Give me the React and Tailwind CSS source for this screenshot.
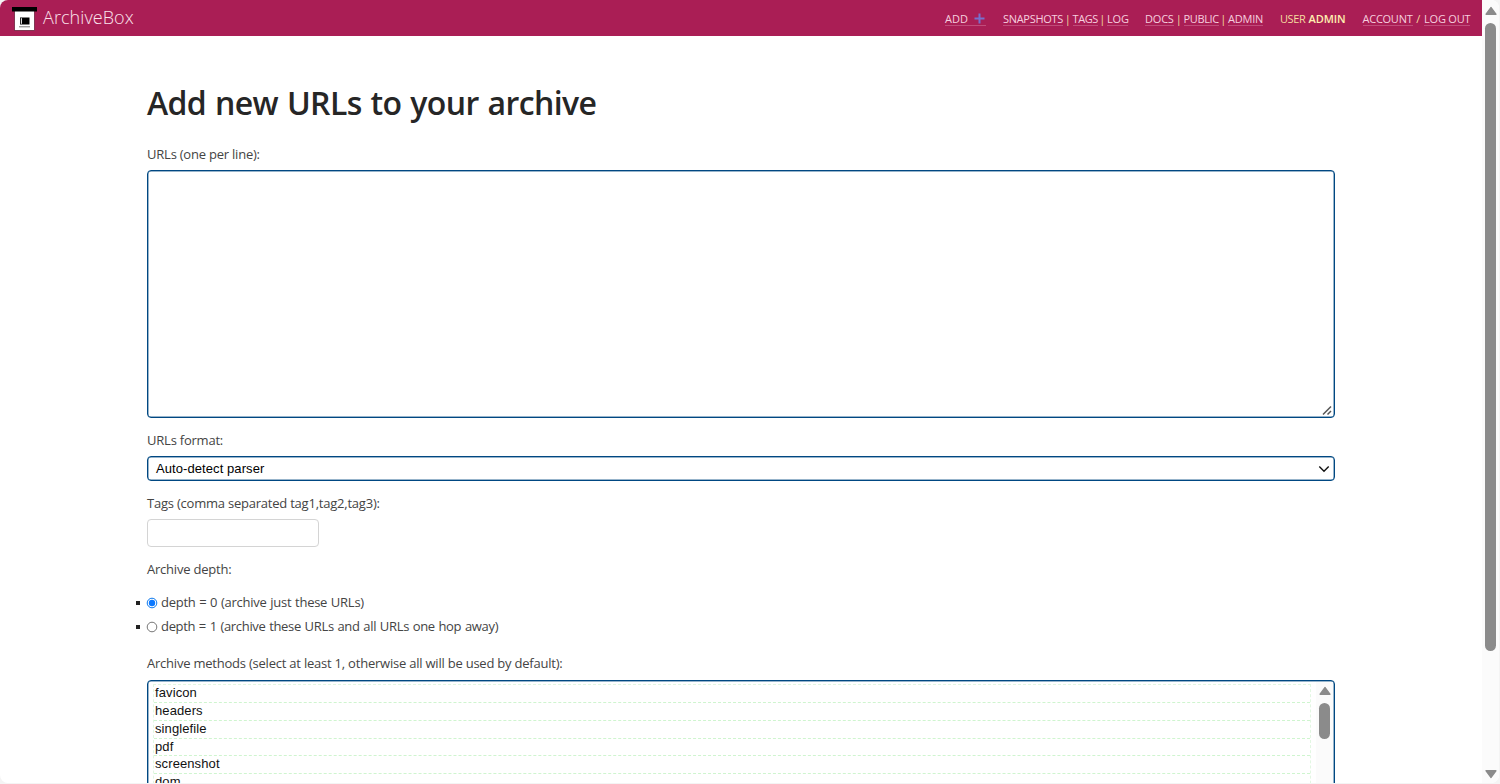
import React from "react";

const methods = ["favicon", "headers", "singlefile", "pdf", "screenshot", "dom"];

function Logo() {
  return (
    <svg width="25" height="24" viewBox="0 0 25 24" className="shrink-0">
      <rect x="2.5" y="3" width="20" height="20.5" fill="#fff" stroke="#6b2440" strokeWidth="0.8" />
      <rect x="0" y="0" width="25" height="4.5" fill="#000" />
      <rect x="8" y="10.5" width="9.5" height="7" fill="#000" />
      <rect x="8.8" y="11.2" width="1.2" height="5.6" fill="#ddd" />
      <rect x="7" y="19.3" width="11" height="1" fill="#777" />
    </svg>
  );
}

function NavLink({ children, className = "" }) {
  return (
    <a className={`flex h-[14px] items-center border-b border-[#c04c7a] whitespace-nowrap text-[#f6cfdf] ${className}`}>
      {children}
    </a>
  );
}

function Arrow({ down = false }) {
  return (
    <svg width="12" height="10" viewBox="0 0 12 10" className={down ? "shrink-0 rotate-180" : "shrink-0"}>
      <path d="M6 1.6 10.8 8.3H1.2Z" fill="#8b8b8b" stroke="#8b8b8b" strokeWidth="1.6" strokeLinejoin="round" />
    </svg>
  );
}

function Label({ children, className = "" }) {
  return <div className={`h-5 text-[13px] leading-[18px] tracking-[-0.22px] whitespace-nowrap text-[#444] ${className}`}>{children}</div>;
}

function Radio({ checked, children, className = "" }) {
  return (
    <div className="-ml-3 flex h-5 items-center">
      <span className="mt-px h-1 w-1 translate-x-px bg-[#222]" />
      <svg width="12" height="12" viewBox="0 0 12 12" className="mt-px ml-[7px]">
        <circle cx="6" cy="6" r="4.8" fill="#fff" stroke={checked ? "#0b78ee" : "#777"} strokeWidth="1" />
        {checked && <circle cx="6" cy="6" r="3.2" fill="#0b78ff" />}
      </svg>
      <span className={`ml-[3px] text-[13px] leading-5 whitespace-nowrap text-[#444] [word-spacing:0.6px] ${className}`}>{children}</span>
    </div>
  );
}

export default function App() {
  return (
    <div className="h-[784px] w-[1500px] overflow-hidden bg-[#f4f4f4] font-['Open_Sans',sans-serif]">
      <div className="flex h-[783px] w-[1499px] overflow-hidden rounded-lg bg-white">
        <div className="flex w-[1482px] shrink-0 flex-col">
          <header className="flex h-9 shrink-0 items-center bg-[#aa1e55] pr-3 pl-3">
            <div className="mt-0.5 flex">
              <Logo />
            </div>
            <span className="ml-[6px] -mt-0.5 text-[18px] leading-6 font-light tracking-[0.07px] whitespace-nowrap text-[#fbe3ec]">ArchiveBox</span>
            <nav className="mt-[2px] ml-auto flex items-center text-[11px] leading-[14px] tracking-[-0.2px] text-[#f5dd9f]">
              <NavLink className="w-[41px]">
                <span className="tracking-normal">ADD</span>
                <svg width="11" height="11" viewBox="0 0 11 11" className="ml-[6px]">
                  <path d="M5.5 .5v10M.5 5.5h10" stroke="#7770cc" strokeWidth="2" />
                </svg>
              </NavLink>
              <NavLink className="ml-[17px] w-[60px] tracking-[-0.3px]">SNAPSHOTS</NavLink>
              <span className="w-[9.5px] text-center">|</span>
              <NavLink className="w-[25px] tracking-[-0.4px]">TAGS</NavLink>
              <span className="w-[9.5px] text-center">|</span>
              <NavLink className="w-[21px]">LOG</NavLink>
              <NavLink className="ml-[17px] w-[29px]">DOCS</NavLink>
              <span className="w-[9.5px] text-center">|</span>
              <NavLink className="w-[35px] tracking-[-0.35px]">PUBLIC</NavLink>
              <span className="w-[9.5px] text-center">|</span>
              <NavLink className="w-[35px]">ADMIN</NavLink>
              <span className="ml-[17px] w-[28.5px] tracking-[-0.4px] whitespace-nowrap">USER</span>
              <b className="w-[54px] font-semibold tracking-[-0.1px] text-[#ffeeb0]">ADMIN</b>
              <NavLink className="w-[50px] tracking-[-0.25px]">ACCOUNT</NavLink>
              <span className="w-[11.5px] text-center">/</span>
              <NavLink className="w-[46px]">LOG OUT</NavLink>
            </nav>
          </header>

          <main className="ml-[147px] flex w-[1188px] flex-col pt-[42px]">
            <h1 className="h-[50px] text-[32px] leading-[49px] font-[560] tracking-[-0.62px] whitespace-nowrap text-[#262626] [word-spacing:1.2px]">Add new URLs to your archive</h1>
            <Label className="mt-[17px]">URLs (one per line):</Label>
            <div className="mt-[5px] flex h-[248px] items-end justify-end rounded-[4px] border border-[#004882] pr-px pb-px shadow-[inset_0_0_0_0.5px_#316a98]">
              <svg width="11" height="11" viewBox="0 0 11 11">
                <path d="M1 9.5 9 1.5M5.5 9.5 9 6" stroke="#555" strokeWidth="1.5" />
              </svg>
            </div>
            <Label className="mt-[13px]">URLs format:</Label>
            <div className="mt-[5px] flex h-[25px] items-center justify-between rounded-[4px] border border-[#004882] pr-1 pl-2 shadow-[inset_0_0_0_0.5px_#316a98]">
              <span className="font-['Liberation_Sans',sans-serif] text-[13px] leading-5 tracking-[0.08px] whitespace-nowrap text-black">Auto-detect parser</span>
              <svg width="12" height="8" viewBox="0 0 12 8">
                <path d="m1.3 1.5 4.7 4.7 4.7-4.7" fill="none" stroke="#111" strokeWidth="1.4" />
              </svg>
            </div>
            <Label className="mt-[13px]">Tags (comma separated tag1,tag2,tag3):</Label>
            <div className="mt-[5px] h-7 w-[172px] rounded-[4px] border border-[#d4d4d4]" />
            <Label className="mt-[13px]">Archive depth:</Label>
            <div className="mt-3 flex flex-col gap-1">
              <Radio checked className="tracking-[-0.26px]">depth = 0 (archive just these URLs)</Radio>
              <Radio className="tracking-[-0.32px]">depth = 1 (archive these URLs and all URLs one hop away)</Radio>
            </div>
            <Label className="mt-[18px]">Archive methods (select at least 1, otherwise all will be used by default):</Label>
            <div className="mt-[6px] flex h-[120px] shrink-0 overflow-hidden rounded-[4px] border border-[#004882] pl-[5px] shadow-[inset_0_0_0_0.5px_#316a98]">
              <div className="mt-[3px] w-[1158px] border border-dashed border-[#e2f7e2]">
                {methods.map((m) => (
                  <div key={m} className="h-[17.85px] border-b border-dashed border-[#cff5cf] pl-px font-['Liberation_Sans',sans-serif] text-[13px] leading-[15px] tracking-[0.1px] text-[#111]">
                    {m}
                  </div>
                ))}
              </div>
              <div className="mt-px mr-px ml-[5px] flex flex-1 flex-col items-center bg-[#fbfbfb] pt-[4px]">
                <Arrow />
                <div className="mt-[7px] h-9 w-[11px] rounded-full bg-[#8b8b8b]" />
              </div>
            </div>
          </main>
        </div>
        <aside className="flex flex-1 flex-col items-center bg-[#fbfbfb] pt-[6px] pb-1">
          <Arrow />
          <div className="mt-[7px] h-[628px] w-[11px] rounded-full bg-[#8b8b8b]" />
          <div className="mt-auto flex">
            <Arrow down />
          </div>
        </aside>
      </div>
    </div>
  );
}
